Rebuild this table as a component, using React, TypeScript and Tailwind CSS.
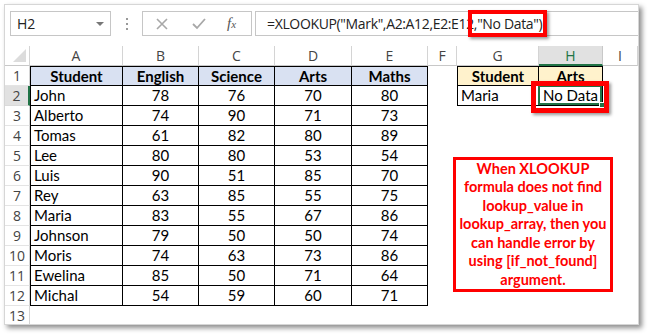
import React from "react";

const rows: [string, number, number, number, number][] = [
  ["John", 78, 76, 70, 80],
  ["Alberto", 74, 90, 71, 73],
  ["Tomas", 61, 82, 80, 89],
  ["Lee", 80, 80, 53, 54],
  ["Luis", 90, 51, 85, 70],
  ["Rey", 63, 85, 55, 75],
  ["Maria", 83, 55, 67, 86],
  ["Johnson", 79, 50, 50, 74],
  ["Moris", 74, 63, 73, 86],
  ["Ewelina", 85, 50, 71, 64],
  ["Michal", 54, 59, 60, 71],
];

const cols = ["A", "B", "C", "D", "E", "F", "G", "H", "I"];

const cell = "h-[20px] flex items-center text-[15px] leading-none text-black";
const boxed = "border-r border-b border-black";

function RowHead({ n, active }: { n: number; active?: boolean }) {
  return (
    <div
      className={
        active
          ? "h-[20px] flex items-center justify-center bg-[#e1e1e1] border-r-2 border-r-[#217346] border-b border-b-[#dadada] text-[14px] text-[#444] font-['Open_Sans',sans-serif]"
          : "h-[20px] flex items-center justify-center border-r border-r-[#d4d4d4] border-b border-b-[#e4e4e4] text-[14px] text-[#444] font-['Open_Sans',sans-serif]"
      }
    >
      {n}
    </div>
  );
}

export default function App() {
  return (
    <div className="w-[648px] h-[336px] bg-white relative overflow-hidden font-['Lato',sans-serif]">
      <div className="ml-[4px] mt-[4px] w-[635px] h-[321px] border border-[#d6d6d6] bg-white overflow-hidden shadow-[3px_3px_5px_rgba(0,0,0,0.45)]">
        {/* formula bar */}
        <div className="flex items-center h-[25px] mt-[6px] font-['Open_Sans',sans-serif]">
          <div className="ml-[5px] w-[101px] h-[25px] border border-[#c6c6c6] flex items-center justify-between pl-[6px] pr-[6px]">
            <span className="text-[14px] text-[#222]">H2</span>
            <span className="w-0 h-0 border-l-[4px] border-r-[4px] border-t-[4px] border-l-transparent border-r-transparent border-t-[#777]" />
          </div>
          <div className="w-[31px] flex flex-col items-center gap-[3px]">
            <span className="w-[2px] h-[2px] bg-[#999]" />
            <span className="w-[2px] h-[2px] bg-[#999]" />
            <span className="w-[2px] h-[2px] bg-[#999]" />
          </div>
          <div className="w-[110px] h-[25px] border border-[#c6c6c6] flex items-center text-[#b0b0b0]">
            <svg className="ml-[13px]" width="12" height="12" viewBox="0 0 12 12">
              <path d="M1 1L11 11M11 1L1 11" stroke="#a8a8a8" strokeWidth="1.6" fill="none" />
            </svg>
            <svg className="ml-[24px]" width="14" height="12" viewBox="0 0 14 12">
              <path d="M1 6L5 10L13 1" stroke="#a8a8a8" strokeWidth="1.8" fill="none" />
            </svg>
            <span className="ml-[21px] text-[15px] italic text-[#555] font-['Liberation_Serif',serif]">
              f<span className="text-[11px]">x</span>
            </span>
          </div>
          <div className="ml-[3px] flex-1 h-[25px] border-l border-t border-b border-[#c6c6c6] flex items-center pl-[11px]">
            <span className="text-[14px] text-[#222] tracking-[-0.35px]">=XLOOKUP("Mark",A2:A12,E2:E12,"No Data")</span>
          </div>
        </div>

        {/* sheet */}
        <div className="mt-[10px] grid grid-cols-[25px_93px_76px_76px_77px_76px_29px_82px_64px_1fr]">
          {/* column headers */}
          <div className="h-[20px] border-r border-[#d4d4d4] border-b border-b-[#c8c8c8] relative">
            <span className="absolute right-[3px] bottom-[3px] w-0 h-0 border-l-[13px] border-t-[13px] border-l-transparent border-t-transparent border-b-0 border-r-[13px] border-r-[#dcdcdc]" />
          </div>
          {cols.map((c) =>
            c === "H" ? (
              <div
                key={c}
                className="h-[20px] flex items-center justify-center bg-[#e1e1e1] border-r border-r-[#c8c8c8] border-b-2 border-b-[#217346] text-[14px] text-[#217346] font-['Open_Sans',sans-serif]"
              >
                {c}
              </div>
            ) : (
              <div
                key={c}
                className="h-[20px] flex items-center justify-center border-r border-r-[#d4d4d4] border-b border-b-[#c8c8c8] text-[14px] text-[#444] font-['Open_Sans',sans-serif]"
              >
                {c}
              </div>
            )
          )}

          {/* row 1 */}
          <RowHead n={1} />
          <div className={`${cell} ${boxed} border-l border-t justify-center font-bold bg-[#d9e1f2]`}>Student</div>
          <div className={`${cell} ${boxed} border-t justify-center font-bold bg-[#d9e1f2]`}>English</div>
          <div className={`${cell} ${boxed} border-t justify-center font-bold bg-[#d9e1f2]`}>Science</div>
          <div className={`${cell} ${boxed} border-t justify-center font-bold bg-[#d9e1f2]`}>Arts</div>
          <div className={`${cell} ${boxed} border-t justify-center font-bold bg-[#d9e1f2]`}>Maths</div>
          <div className={cell} />
          <div className={`${cell} ${boxed} border-l border-t justify-center font-bold bg-[#fff2cc]`}>Student</div>
          <div className={`${cell} ${boxed} border-t justify-center font-bold bg-[#fff2cc]`}>Arts</div>
          <div className={cell} />

          {rows.map((r, i) => (
            <React.Fragment key={r[0]}>
              <RowHead n={i + 2} active={i === 0} />
              <div className={`${cell} ${boxed} border-l pl-[3px]`}>{r[0]}</div>
              <div className={`${cell} ${boxed} justify-center`}>{r[1]}</div>
              <div className={`${cell} ${boxed} justify-center`}>{r[2]}</div>
              <div className={`${cell} ${boxed} justify-center`}>{r[3]}</div>
              <div className={`${cell} ${boxed} justify-center`}>{r[4]}</div>
              <div className={cell} />
              {i === 0 ? (
                <>
                  <div className={`${cell} ${boxed} border-l pl-[3px]`}>Maria</div>
                  <div className={`${cell} ${boxed} justify-center relative text-[14px]`}>
                    No Data
                    <span className="absolute -left-[1px] -top-[1px] -right-[0px] -bottom-[0px] border-2 border-[#217346]" />
                    <span className="absolute -right-[3px] -bottom-[3px] w-[6px] h-[6px] bg-[#217346] border border-white" />
                  </div>
                </>
              ) : (
                <>
                  <div className={cell} />
                  <div className={cell} />
                </>
              )}
              <div className={cell} />
            </React.Fragment>
          ))}

          <RowHead n={13} />
          <div className="col-span-9 h-[20px]" />
        </div>
      </div>

      {/* callouts */}
      <div className="absolute left-[468px] top-[10px] w-[79px] h-[27px] border-[4px] border-[#ff0000] shadow-[2px_2px_3px_rgba(0,0,0,0.4)]" />
      <div className="absolute left-[531px] top-[81px] w-[78px] h-[32px] border-[5px] border-[#ff0000] shadow-[2px_2px_3px_rgba(0,0,0,0.4)]" />
      <div className="absolute left-[453px] top-[157px] w-[160px] h-[135px] border-[3px] border-[#ff0000] bg-white flex flex-col items-center justify-center text-[#ff0000] font-bold text-[14.5px] leading-[18.5px] text-center">
        <span>When XLOOKUP</span>
        <span>formula does not find</span>
        <span>lookup_value in</span>
        <span>lookup_array, then you</span>
        <span>can handle error by</span>
        <span>using [if_not_found]</span>
        <span>argument.</span>
      </div>
    </div>
  );
}
